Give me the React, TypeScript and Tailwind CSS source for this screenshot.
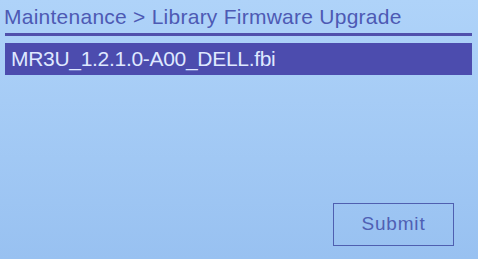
export default function App() {
  return (
    <div
      className="w-[478px] h-[259px] overflow-hidden bg-gradient-to-b from-[#afd3f9] to-[#98c1f1] flex flex-col"
      style={{ fontFamily: '"Liberation Sans", Arial, sans-serif' }}
    >
      <div className="pl-[4px] pt-[5px] h-[33px] text-[21px] leading-[24px] text-[#4d5ab4] tracking-[0.25px] whitespace-nowrap">
        Maintenance &gt; Library Firmware Upgrade
      </div>
      <div className="ml-[5px] w-[467px] h-[3px] bg-[#5050ac]" />
      <div className="ml-[5px] mt-[7px] w-[467px] h-[32px] bg-[#4c4cae] flex items-center pl-[6px]">
        <span className="text-[21px] leading-[24px] text-[#dfe8ff] tracking-[-0.3px]">
          MR3U_1.2.1.0-A00_DELL.fbi
        </span>
      </div>
      <div className="flex-1 flex items-end justify-end pr-[24px] pb-[13px]">
        <button className="w-[121px] h-[43px] border border-[#4f5fb0] text-[19px] tracking-[0.8px] text-[#4f60b4] flex items-center justify-center">
          Submit
        </button>
      </div>
    </div>
  );
}
